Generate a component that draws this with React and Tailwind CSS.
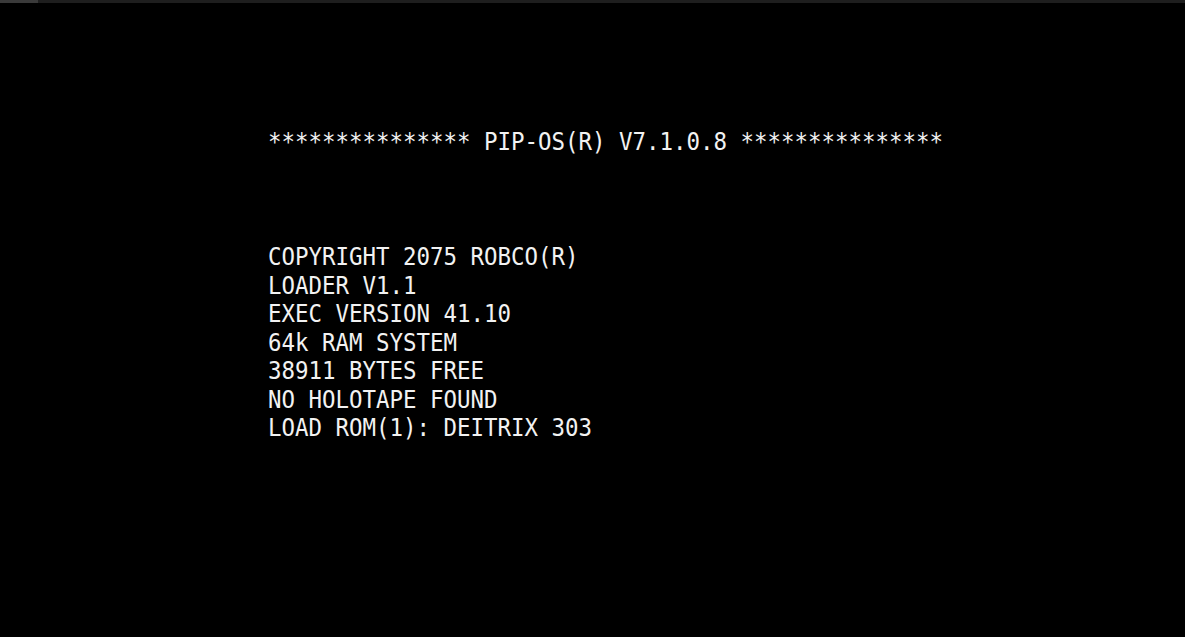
export default function App() {
  const lines = [
    "COPYRIGHT 2075 ROBCO(R)",
    "LOADER V1.1",
    "EXEC VERSION 41.10",
    "64k RAM SYSTEM",
    "38911 BYTES FREE",
    "NO HOLOTAPE FOUND",
    "LOAD ROM(1): DEITRIX 303",
  ];
  return (
    <div className="min-h-screen h-[637px] w-full bg-black overflow-hidden flex flex-col">
      <div className="h-[3px] w-full flex shrink-0">
        <div className="w-[38px] bg-[#3a3a3a]" />
        <div className="flex-1 bg-[#1e1e1e]" />
      </div>
      <div
        className="pl-[268px] pt-[125px] text-[#f2f2f2] text-[25px] leading-[28.5px] whitespace-pre"
        style={{ fontFamily: '"DejaVu Sans Mono", "Liberation Mono", monospace' }}
      >
        <div className="origin-left scale-x-[0.897]">
          {"*************** PIP-OS(R) V7.1.0.8 ***************"}
        </div>
        <div className="mt-[86.5px] flex flex-col">
          {lines.map((l) => (
            <div key={l} className="origin-left scale-x-[0.897]">
              {l}
            </div>
          ))}
        </div>
      </div>
    </div>
  );
}
